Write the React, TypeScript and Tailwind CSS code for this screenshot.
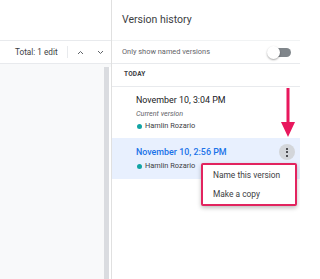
import React from "react";

export default function App() {
  return (
    <div
      className="w-[300px] h-[279px] flex overflow-hidden bg-white text-[#3c4043]"
      style={{ fontFamily: "Roboto, 'Liberation Sans', sans-serif" }}
    >
      {/* Left document area */}
      <div className="w-[111px] flex flex-col shrink-0">
        <div className="h-[41px] border-b border-[#e8eaed] shrink-0" />
        <div className="h-[23px] border-b border-[#e8eaed] shrink-0 flex items-center">
          <span className="ml-[15px] text-[8.2px] text-[#3c4043] whitespace-nowrap">Total: 1 edit</span>
          <div className="ml-[9px] w-px h-[12px] bg-[#e8eaed]" />
          <svg className="ml-[9px]" width="7" height="5" viewBox="0 0 7 5">
            <path d="M1 4 L3.5 1.5 L6 4" fill="none" stroke="#5f6368" strokeWidth="1" />
          </svg>
          <svg className="ml-[13px]" width="7" height="5" viewBox="0 0 7 5">
            <path d="M1 1 L3.5 3.5 L6 1" fill="none" stroke="#5f6368" strokeWidth="1" />
          </svg>
        </div>
        <div className="flex-1 flex">
          <div className="w-[104px] bg-[#f8f9fa]" />
          <div className="w-[7px] bg-[#f8f9fa] pt-[3px] flex">
            <div className="w-[5px] h-full bg-[#dadce0]" />
            <div className="w-[2px] bg-white" />
          </div>
        </div>
      </div>

      {/* Right version history panel */}
      <div className="flex-1 relative border-l border-[#e0e0e0] flex flex-col">
        <div className="h-[41px] border-b border-[#f1f3f4] flex items-center pl-[10px] shrink-0">
          <span className="text-[10.5px] text-[#3c4043]">Version history</span>
        </div>
        <div className="h-[23px] border-b border-[#e8eaed] flex items-center pl-[10px] pr-[9px] shrink-0">
          <span className="text-[7.4px] text-[#5f6368] whitespace-nowrap">Only show named versions</span>
          <div className="ml-auto relative w-[24px] h-[12px] flex items-center">
            <div className="absolute right-0 w-[18px] h-[9px] rounded-full bg-[#80868b]" />
            <div className="absolute left-0 w-[13px] h-[13px] rounded-full bg-white shadow-[0_1px_2px_rgba(0,0,0,0.35)]" />
          </div>
        </div>
        <div className="h-[23px] border-b border-[#e8eaed] flex items-center pl-[12px] shrink-0">
          <span className="text-[6.5px] font-bold text-[#3c4043] tracking-[0.2px]">TODAY</span>
        </div>
        <div className="h-[51px] pl-[24px] pt-[7px] flex flex-col shrink-0">
          <span className="text-[8.9px] text-[#202124] leading-[12px] whitespace-nowrap">November 10, 3:04 PM</span>
          <span className="text-[7.2px] italic text-[#5f6368] leading-[13px] mt-[1px]">Current version</span>
          <div className="flex items-center leading-[12px]">
            <div className="w-[5px] h-[5px] rounded-full bg-[#12a4a4] ml-[1px]" />
            <span className="ml-[3px] text-[7.4px] font-normal text-[#3c4043] whitespace-nowrap">Hamlin Rozario</span>
          </div>
        </div>
        <div className="h-[41px] bg-[#e8f0fe] pl-[24px] pt-[8px] flex flex-col shrink-0 relative">
          <span className="text-[8.9px] font-medium text-[#1a73e8] leading-[12px] whitespace-nowrap">November 10, 2:56 PM</span>
          <div className="flex items-center leading-[12px] mt-[2px]">
            <div className="w-[5px] h-[5px] rounded-full bg-[#12a4a4] ml-[1px]" />
            <span className="ml-[3px] text-[7.4px] font-normal text-[#3c4043] whitespace-nowrap">Hamlin Rozario</span>
          </div>
          <div className="absolute right-[5px] top-[6px] w-[16px] h-[16px] rounded-full bg-[#d3d6da] flex flex-col items-center justify-center gap-[1.5px]">
            <div className="w-[2px] h-[2px] rounded-full bg-[#202124]" />
            <div className="w-[2px] h-[2px] rounded-full bg-[#202124]" />
            <div className="w-[2px] h-[2px] rounded-full bg-[#202124]" />
          </div>
        </div>
        <div className="flex-1" />

        {/* Pink arrow */}
        <svg className="absolute left-[168px] top-[88px]" width="16" height="52" viewBox="0 0 16 52">
          <rect x="6.5" y="0" width="3" height="38" fill="#e8175d" />
          <path d="M1 34 L15 34 L8 49 Z" fill="#e8175d" />
        </svg>

        {/* Context menu */}
        <div className="absolute left-[89px] top-[163px] w-[96px] h-[43px] bg-white border-2 border-[#e2245f] rounded-[2px] shadow-[0_2px_4px_rgba(0,0,0,0.25)] flex flex-col justify-center pl-[10px] gap-[8px]">
          <span className="text-[8.4px] text-[#3c4043] leading-[11px] whitespace-nowrap">Name this version</span>
          <span className="text-[8.4px] text-[#3c4043] leading-[11px] whitespace-nowrap">Make a copy</span>
        </div>
      </div>
    </div>
  );
}
